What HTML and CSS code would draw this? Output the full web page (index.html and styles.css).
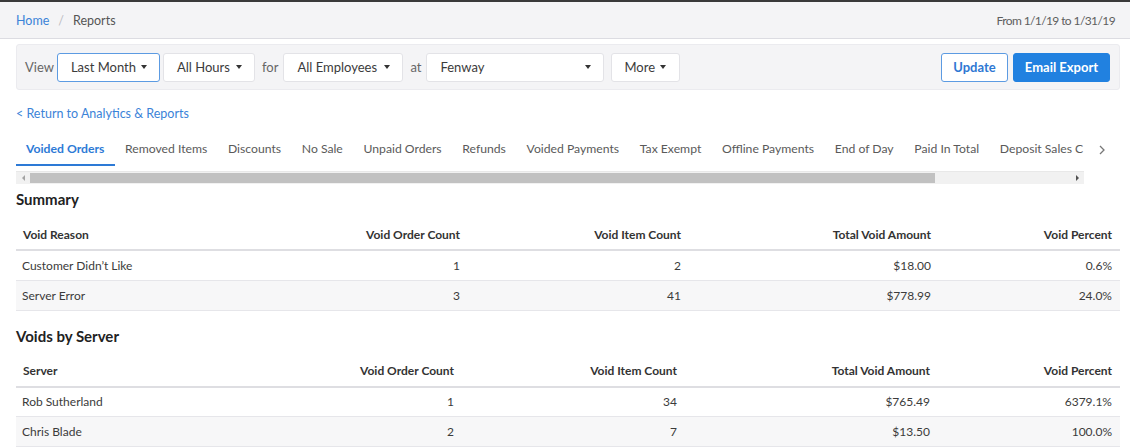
FILE: index.html
```html
<!DOCTYPE html>
<html lang="en">
<head>
<meta charset="utf-8">
<title>Reports</title>
<link rel="stylesheet" href="styles.css">
</head>
<body>
<div class="topline"></div>
<header class="crumbbar">
  <nav class="crumbs">
    <a class="crumb-link" href="#">Home</a>
    <span class="crumb-sep">/</span>
    <span class="crumb-current">Reports</span>
  </nav>
  <div class="range">From 1/1/19 to 1/31/19</div>
</header>

<main class="page">
  <div class="filters">
    <div class="filters-left">
      <span class="lbl lbl-first">View</span>
      <div class="dd dd-active w-month" role="button"><span class="dd-text">Last Month</span><i class="caret"></i></div>
      <div class="dd w-hours" role="button"><span class="dd-text">All Hours</span><i class="caret"></i></div>
      <span class="lbl">for</span>
      <div class="dd w-emp" role="button"><span class="dd-text">All Employees</span><i class="caret"></i></div>
      <span class="lbl">at</span>
      <div class="dd w-loc" role="button"><span class="dd-text">Fenway</span><i class="caret"></i></div>
      <div class="dd w-more" role="button"><span class="dd-text">More</span><i class="caret"></i></div>
    </div>
    <div class="filters-right">
      <div class="btn btn-outline" role="button">Update</div>
      <div class="btn btn-primary" role="button">Email Export</div>
    </div>
  </div>

  <a class="back" href="#">&lt; Return to Analytics &amp; Reports</a>

  <div class="tabs-wrap">
    <div class="tabs-col">
      <div class="tabs">
        <a class="tab active" href="#">Voided Orders</a>
        <a class="tab" href="#">Removed Items</a>
        <a class="tab" href="#">Discounts</a>
        <a class="tab" href="#">No Sale</a>
        <a class="tab" href="#">Unpaid Orders</a>
        <a class="tab" href="#">Refunds</a>
        <a class="tab" href="#">Voided Payments</a>
        <a class="tab" href="#">Tax Exempt</a>
        <a class="tab" href="#">Offline Payments</a>
        <a class="tab" href="#">End of Day</a>
        <a class="tab" href="#">Paid In Total</a>
        <a class="tab" href="#">Deposit Sales C</a>
      </div>
      <div class="hscroll">
        <span class="sb-arrow"><i class="tri-left"></i></span>
        <span class="sb-thumb"></span>
        <span class="sb-space"></span>
        <span class="sb-arrow"><i class="tri-right"></i></span>
      </div>
    </div>
    <div class="tabs-next">
      <svg width="8" height="12" viewBox="0 0 8 12"><path d="M2 2 L6 6 L2 10" fill="none" stroke="#777" stroke-width="1.3"/></svg>
    </div>
  </div>

  <h2 class="section-title">Summary</h2>
  <table class="report">
    <colgroup>
      <col class="c-a1"><col class="c-a2"><col class="c-a3"><col class="c-a4"><col class="c-a5">
    </colgroup>
    <thead>
      <tr><th class="l">Void Reason</th><th>Void Order Count</th><th>Void Item Count</th><th>Total Void Amount</th><th>Void Percent</th></tr>
    </thead>
    <tbody>
      <tr><td class="l">Customer Didn’t Like</td><td>1</td><td>2</td><td>$18.00</td><td>0.6%</td></tr>
      <tr><td class="l">Server Error</td><td>3</td><td>41</td><td>$778.99</td><td>24.0%</td></tr>
    </tbody>
  </table>

  <h2 class="section-title second">Voids by Server</h2>
  <table class="report">
    <colgroup>
      <col class="c-b1"><col class="c-b2"><col class="c-b3"><col class="c-b4"><col class="c-b5">
    </colgroup>
    <thead>
      <tr><th class="l">Server</th><th>Void Order Count</th><th>Void Item Count</th><th>Total Void Amount</th><th>Void Percent</th></tr>
    </thead>
    <tbody>
      <tr><td class="l">Rob Sutherland</td><td>1</td><td>34</td><td>$765.49</td><td>6379.1%</td></tr>
      <tr><td class="l">Chris Blade</td><td>2</td><td>7</td><td>$13.50</td><td>100.0%</td></tr>
    </tbody>
  </table>
</main>
</body>
</html>
```
FILE: styles.css
```css
* { box-sizing: border-box; }
html, body { margin: 0; padding: 0; background: #fff; }
body {
  font-family: Lato, "Liberation Sans", sans-serif;
  font-size: 13px;
  color: #3b3b3b;
  overflow: hidden;
}
a { text-decoration: none; }

.topline { height: 2px; background: #3a3a3a; }

.crumbbar {
  height: 37px;
  background: #f4f4f6;
  border-bottom: 1px solid #dcdce2;
  display: flex;
  align-items: center;
  justify-content: space-between;
  padding: 0 15px 0 16px;
  font-size: 12.5px;
}
.crumbs { display: flex; align-items: center; gap: 9px; }
.crumb-link { color: #3b83d8; }
.crumb-sep { color: #bdbdc3; }
.crumb-current { color: #555; }
.range { color: #5e5e5e; font-size: 12px; letter-spacing: -0.6px; }

.page { padding: 5px 10px 0 16px; }

.filters {
  height: 46px;
  background: #f4f4f6;
  border: 1px solid #ebebef;
  border-radius: 3px;
  display: flex;
  align-items: center;
  justify-content: space-between;
  padding: 0 9px 0 8px;
}
.filters-left { display: flex; align-items: center; }
.lbl { color: #666; margin: 0 5px 0 0; }
.lbl-first { margin-right: 3px; }
.dd + .lbl { margin-left: 4px; }
.dd {
  height: 29px;
  background: #fff;
  border: 1px solid #e3e3e7;
  border-radius: 3px;
  display: flex;
  align-items: center;
  justify-content: space-between;
  padding: 0 12px 0 13px;
  color: #3b3b3b;
  margin-right: 3px;
}
.dd-text { white-space: nowrap; }
.dd-active { border-color: #5c9be2; }
.caret {
  width: 0; height: 0;
  border-left: 3.5px solid transparent;
  border-right: 3.5px solid transparent;
  border-top: 4px solid #333;
}
.w-month { width: 103px; }
.w-hours { width: 92px; }
.w-emp { width: 120px; }
.w-loc { width: 178px; margin-right: 7px; }
.w-more { width: 69px; padding: 0 13px 0 12px; }

.filters-right { display: flex; align-items: center; gap: 5px; }
.btn {
  height: 29px;
  border-radius: 3px;
  font-weight: 700;
  display: flex;
  align-items: center;
  justify-content: center;
  white-space: nowrap;
}
.btn-outline { width: 67px; background: #fff; border: 1px solid #5c9be2; color: #2f78d3; }
.btn-primary { width: 97px; background: #2181e0; border: 1px solid #2181e0; color: #fff; }

.back { display: block; color: #3b83d8; margin-top: 16px; line-height: 16px; font-size: 12.5px; }

.tabs-wrap { display: flex; margin-top: 12px; }
.tabs-col { width: 1068px; }
.tabs { display: flex; height: 32px; white-space: nowrap; font-size: 12.2px; width: 1072px; overflow: hidden; }
.tab {
  flex-shrink: 0;
  color: #5a5a5a;
  padding: 0 10.7px 0 10px;
  line-height: 30px;
  border-bottom: 2px solid transparent;
}
.tab.active { color: #2d7ad6; font-weight: 700; border-bottom-color: #2d7ad6; }
.tabs-next { width: 36px; display: flex; justify-content: center; padding-top: 10px; }

.hscroll {
  margin-top: 5px;
  height: 13px;
  background: #f1f1f1;
  border-top: 1px solid #e8e8e8;
  display: flex;
  align-items: stretch;
}
.sb-arrow { width: 14px; display: flex; align-items: center; justify-content: center; }
.tri-left { width: 0; height: 0; border-top: 3px solid transparent; border-bottom: 3px solid transparent; border-right: 3px solid #a3a3a3; }
.tri-right { width: 0; height: 0; border-top: 3px solid transparent; border-bottom: 3px solid transparent; border-left: 3px solid #505050; }
.sb-thumb { width: 905px; background: #c1c1c1; margin: 1px 0; }
.sb-space { flex: 1; }

.section-title { font-size: 15px; font-weight: 700; color: #222; margin: 6px 0 0 0; line-height: 18px; }
.section-title.second { margin-top: 16px; }

.report { width: 1104px; border-collapse: collapse; table-layout: fixed; margin-top: 11px; font-size: 12px; }
.report th {
  height: 31px;
  text-align: right;
  font-weight: 700;
  color: #333;
  padding: 0 8px 0 7px;
  border-bottom: 2px solid #dedee2;
}
.report td {
  height: 30px;
  text-align: right;
  color: #3b3b3b;
  padding: 0 8px 0 6px;
  border-bottom: 1px solid #e6e6ea;
}
.report .l { text-align: left; }
.report tbody tr:nth-child(even) td { background: #f7f7f8; }

.c-a1 { width: 304px; } .c-a2 { width: 148px; } .c-a3 { width: 221px; } .c-a4 { width: 250px; } .c-a5 { width: 181px; }
.c-b1 { width: 304px; } .c-b2 { width: 142px; } .c-b3 { width: 223px; } .c-b4 { width: 253px; } .c-b5 { width: 182px; }
```
